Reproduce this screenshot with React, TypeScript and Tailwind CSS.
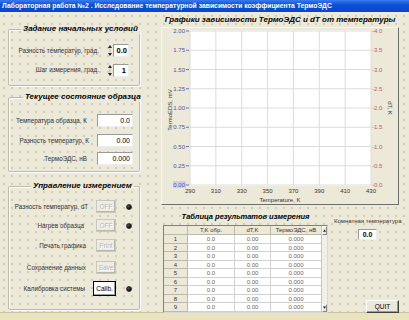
import React from 'react';

const rows = [1, 2, 3, 4, 5, 6, 7, 8, 9];
const xTicks = [290, 310, 330, 350, 370, 390, 410, 430];
const leftTicks = ['2.00', '1.75', '1.50', '1.25', '1.00', '0.75', '0.50', '0.25', '0.00'];
const rightTicks = ['-4.0', '-3.5', '-3.0', '-2.5', '-2.0', '-1.5', '-1.0', '-0.5', '-0.0'];

const Group: React.FC<{ title: string; indent: string; className: string; children: React.ReactNode }> = ({ title, indent, className, children }) => (
  <fieldset className={`min-w-0 w-[132px] border border-[#bdbaa8] rounded-[2px] shadow-[1px_1px_0_#fff,inset_1px_1px_0_#fff] ${className}`}>
    <legend className={`${indent} px-[2px] h-[10px] leading-[10px] text-[8px] font-bold italic text-black whitespace-nowrap`}>
      {title}
    </legend>
    {children}
  </fieldset>
);

const Spinner = () => (
  <svg width="4" height="11" viewBox="0 0 4 11" className="ml-[9px] mr-[1px]">
    <polygon points="2,0 4,3 0,3" fill="#222" />
    <line x1="2" y1="3.5" x2="2" y2="7.5" stroke="#999" strokeWidth="0.6" />
    <polygon points="0,8 4,8 2,11" fill="#222" />
  </svg>
);

const Led = () => (
  <span className="ml-[10px] block w-[6px] h-[6px] rounded-full bg-[radial-gradient(circle_at_35%_35%,#555,#050505_70%)] border border-[#333]" />
);

const Btn: React.FC<{ label: string; on?: boolean }> = ({ label, on }) => (
  <span
    className={
      on
        ? 'flex items-center justify-center w-[23px] h-[15px] bg-white border border-black text-[6.5px] text-black shadow-[inset_-1px_-1px_0_#9a9a9a]'
        : 'flex items-center justify-center w-[20px] h-[13px] bg-[#eeece2] border border-[#c9c7bb] text-[6.5px] text-[#b4b4b4] [text-shadow:1px_1px_0_#fff] shadow-[inset_-1px_-1px_0_#b9b7ab]'
    }
  >
    {label}
  </span>
);

const Chart = () => {
  const x0 = 28, x1 = 209, y0 = 3, y1 = 157;
  const dx = (x1 - x0) / 7;
  const dy = (y1 - y0) / 8;
  return (
    <svg width="236" height="176" viewBox="0 0 236 176" fontFamily="'Liberation Sans', Arial, sans-serif">
      <rect x={x0} y={y0 - 1} width={x1 - x0} height={y1 - y0 + 2} fill="#fff" />
      {xTicks.map((_, i) => (
        <line key={'v' + i} x1={x0 + i * dx} y1={y0} x2={x0 + i * dx} y2={y1} stroke="#dcdcdc" strokeWidth="1" />
      ))}
      {leftTicks.map((_, i) => (
        <line key={'h' + i} x1={x0} y1={y0 + i * dy} x2={x1} y2={y0 + i * dy} stroke="#dcdcdc" strokeWidth="1" />
      ))}
      <rect x="11" y={y1 - 4} width="13" height="7" fill="#c9d1f2" />
      {leftTicks.map((t, i) => (
        <g key={'l' + i} fill="#4656a6" fontSize="6">
          <text x="23" y={y0 + i * dy + 2} textAnchor="end">{t}</text>
          <line x1="24" y1={y0 + i * dy} x2="27" y2={y0 + i * dy} stroke="#4656a6" strokeWidth="0.8" />
        </g>
      ))}
      {rightTicks.map((t, i) => (
        <text key={'r' + i} x="210" y={y0 + i * dy + 2} fontSize="6" fill="#c25a5a">{t}</text>
      ))}
      {xTicks.map((t, i) => (
        <text key={'x' + i} x={x0 + i * dx} y="165" fontSize="6" fill="#333" textAnchor="middle">{t}</text>
      ))}
      <text x="118" y="174" fontSize="6" fill="#333" textAnchor="middle">Temperature, K</text>
      <text x="8" y="82" fontSize="6" fill="#333" textAnchor="middle" dominantBaseline="central" transform="rotate(-90 8 82)">TermoEDS, mV</text>
      <text x="228" y="80" fontSize="6" fill="#333" textAnchor="middle" dominantBaseline="central" transform="rotate(90 228 80)">dT, K</text>
    </svg>
  );
};

const App: React.FC = () => {
  return (
    <div className="w-[409px] h-[320px] overflow-hidden font-['Liberation_Sans',Arial,sans-serif] bg-[#ece9d8]">
      <div className="h-[12px] leading-[12px] pl-[2px] bg-[linear-gradient(#3a7bef,#0b4fd6_40%,#0a47c6)] text-white text-[6.8px] font-bold whitespace-nowrap">
        Лабораторная работа №2 . Исследование температурной зависимости коэффициента ТермоЭДС
      </div>

      <div className="h-[300px] flex bg-[#ece9d8] [background-image:radial-gradient(circle,#c2bea9_0.6px,transparent_0.9px)] [background-size:8px_8px]">
        {/* left column */}
        <div className="ml-[8px] w-[132px] shrink-0 flex flex-col">
          <Group title="Задание начальных условий" indent="ml-[12px]" className="mt-[12px] h-[62px]">
            <div className="pt-[10px] pr-[10px]">
              <div className="flex items-center justify-end h-[13px]">
                <span className="text-[6.3px] text-[#333] whitespace-nowrap">Разность температур, град.</span>
                <Spinner />
                <span className="w-[16px] h-[13px] bg-white border border-[#9a9a9a] border-r-[#eee] border-b-[#eee] text-right pr-[1px] text-[7.5px] leading-[11px] font-bold text-black">0.0</span>
              </div>
              <div className="mt-[6.5px] flex items-center justify-end h-[13px]">
                <span className="text-[6.3px] text-[#333] whitespace-nowrap">Шаг измерения, град.</span>
                <Spinner />
                <span className="w-[16px] h-[13px] bg-white border border-[#9a9a9a] border-r-[#eee] border-b-[#eee] text-right pr-[2px] text-[7.5px] leading-[11px] font-bold text-black">1</span>
              </div>
            </div>
          </Group>

          <Group title="Текущее состояние образца" indent="ml-[14px]" className="mt-[6px] h-[80px]">
            <div className="pt-[12px] pr-[6px]">
              <div className="flex items-center justify-end h-[13px]">
                <span className="text-[6.3px] text-[#333] whitespace-nowrap">Температура образца, К</span>
                <span className="ml-[10px] w-[36px] h-[13px] bg-white border border-[#9a9a9a] border-r-[#eee] border-b-[#eee] text-right pr-[2px] text-[7px] leading-[11px] text-black">0.0</span>
              </div>
              <div className="mt-[7px] flex items-center justify-end h-[13px]">
                <span className="text-[6.3px] text-[#333] whitespace-nowrap">Разность температур, К</span>
                <span className="ml-[8px] w-[36px] h-[13px] bg-white border border-[#9a9a9a] border-r-[#eee] border-b-[#eee] text-right pr-[2px] text-[7px] leading-[11px] text-black">0.00</span>
              </div>
              <div className="mt-[5px] flex items-center justify-end h-[13px]">
                <span className="text-[6.3px] text-[#333] whitespace-nowrap">ТермоЭДС, нВ</span>
                <span className="ml-[10px] w-[36px] h-[13px] bg-white border border-[#9a9a9a] border-r-[#eee] border-b-[#eee] text-right pr-[2px] text-[7px] leading-[11px] text-black">0.000</span>
              </div>
            </div>
          </Group>

          <Group title="Управление измерением" indent="ml-[22px]" className="mt-[9px] h-[129px]">
            <div className="pt-[9px] pr-[1px]">
              <div className="flex items-center justify-end h-[13px]">
                <span className="text-[6.3px] text-[#333] whitespace-nowrap">Разность температур, dT</span>
                <span className="ml-[5px] w-[23px] flex justify-end"><Btn label="OFF" /></span>
                <span className="w-[22px]"><Led /></span>
              </div>
              <div className="mt-[6px] flex items-center justify-end h-[13px]">
                <span className="text-[6.3px] text-[#333] whitespace-nowrap">Нагрев образца</span>
                <span className="ml-[9px] w-[23px] flex justify-end"><Btn label="OFF" /></span>
                <span className="w-[22px]"><Led /></span>
              </div>
              <div className="mt-[7px] flex items-center justify-end h-[13px]">
                <span className="text-[6.3px] text-[#333] whitespace-nowrap">Печать графика</span>
                <span className="ml-[7px] w-[23px] flex justify-end"><Btn label="Print" /></span>
                <span className="w-[22px]" />
              </div>
              <div className="mt-[9px] flex items-center justify-end h-[13px]">
                <span className="text-[6.3px] text-[#333] whitespace-nowrap">Сохранение данных</span>
                <span className="ml-[7px] w-[23px] flex justify-end"><Btn label="Save" /></span>
                <span className="w-[22px]" />
              </div>
              <div className="mt-[8px] flex items-center justify-end h-[13px]">
                <span className="text-[6.3px] text-[#333] whitespace-nowrap">Калибровка системы</span>
                <span className="ml-[8px] w-[23px] flex justify-end"><Btn label="Calib." on /></span>
                <span className="w-[22px]"><Led /></span>
              </div>
            </div>
          </Group>
        </div>

        {/* right column */}
        <div className="ml-[21px] w-[248px] shrink-0 flex flex-col">
          <div className="w-[238px] h-[15px] leading-[15px] text-center text-[8px] font-bold italic text-black whitespace-nowrap">
            Графики зависимости ТермоЭДС и dT от температуры
          </div>
          <div className="w-[238px] h-[178px] bg-[#ece9d8] border border-[#f7f6ef] border-r-[#6e6e6e] border-b-[#6e6e6e]">
            <Chart />
          </div>

          <div className="flex">
            <div className="ml-[2px] flex flex-col">
              <div className="mt-[6px] h-[12px] leading-[12px] text-center text-[7.5px] font-bold italic text-black whitespace-nowrap">
                Таблица результатов измерения
              </div>
              <div className="mt-[2px] flex border border-[#808080] border-r-[#d8d8d8] border-b-[#d8d8d8] bg-white">
                <div className="grid grid-cols-[24px_47px_36px_50px] text-[6px] text-center">
                  <div className="h-[9px] bg-[#ece9d8] border-r border-b border-[#bcb9a9]" />
                  <div className="h-[9px] leading-[9px] bg-[#ece9d8] border-r border-b border-[#bcb9a9] text-[#333]">T,K обр.</div>
                  <div className="h-[9px] leading-[9px] bg-[#ece9d8] border-r border-b border-[#bcb9a9] text-[#333]">dT,K</div>
                  <div className="h-[9px] leading-[9px] bg-[#ece9d8] border-b border-[#bcb9a9] text-[#333] whitespace-nowrap">ТермоЭДС, нВ</div>
                  {rows.map((n) => (
                    <React.Fragment key={n}>
                      <div className="h-[8.5px] leading-[8.5px] bg-[#ece9d8] border-r border-b border-[#bcb9a9] text-[#333]">{n}</div>
                      <div className="h-[8.5px] leading-[8.5px] border-r border-b border-[#d0d0d0] text-[#666]">0.0</div>
                      <div className="h-[8.5px] leading-[8.5px] border-r border-b border-[#d0d0d0] text-[#666]">0.00</div>
                      <div className="h-[8.5px] leading-[8.5px] border-b border-[#d0d0d0] text-[#666]">0.000</div>
                    </React.Fragment>
                  ))}
                </div>
                <div className="w-[6px] flex flex-col bg-[#f1efe6] border-l border-[#c9c6b6]">
                  <div className="h-[9px] flex items-center justify-center bg-[#ece9d8] border border-[#fff] border-r-[#888] border-b-[#888]">
                    <svg width="4" height="3" viewBox="0 0 4 3"><polygon points="2,0 4,3 0,3" fill="#222" /></svg>
                  </div>
                  <div className="flex-1" />
                  <div className="h-[8px] flex items-center justify-center bg-[#ece9d8] border border-[#fff] border-r-[#888] border-b-[#888]">
                    <svg width="4" height="3" viewBox="0 0 4 3"><polygon points="0,0 4,0 2,3" fill="#222" /></svg>
                  </div>
                </div>
              </div>
            </div>

            <div className="ml-[6px] flex flex-col">
              <div className="mt-[12px] h-[8px] leading-[8px] text-[6px] text-[#333] whitespace-nowrap">Комнатная температура</div>
              <div className="mt-[4px] ml-[24px] w-[19px] h-[11px] bg-white border border-[#9a9a9a] border-r-[#eee] border-b-[#eee] text-center text-[7px] leading-[9px] font-bold text-black">0.0</div>
              <div className="mt-[60px] ml-[32px] w-[33px] h-[13px] flex items-center justify-center bg-[#ece9d8] border border-[#fff] border-r-[#404040] border-b-[#404040] shadow-[inset_-1px_-1px_0_#9a9a9a] text-[6.5px] text-black">
                QUIT
              </div>
            </div>
          </div>
        </div>
      </div>

      <div className="h-[8px] bg-[#e9e4bd] border-t border-[#c9c3a0]" />
    </div>
  );
};

export default App;
